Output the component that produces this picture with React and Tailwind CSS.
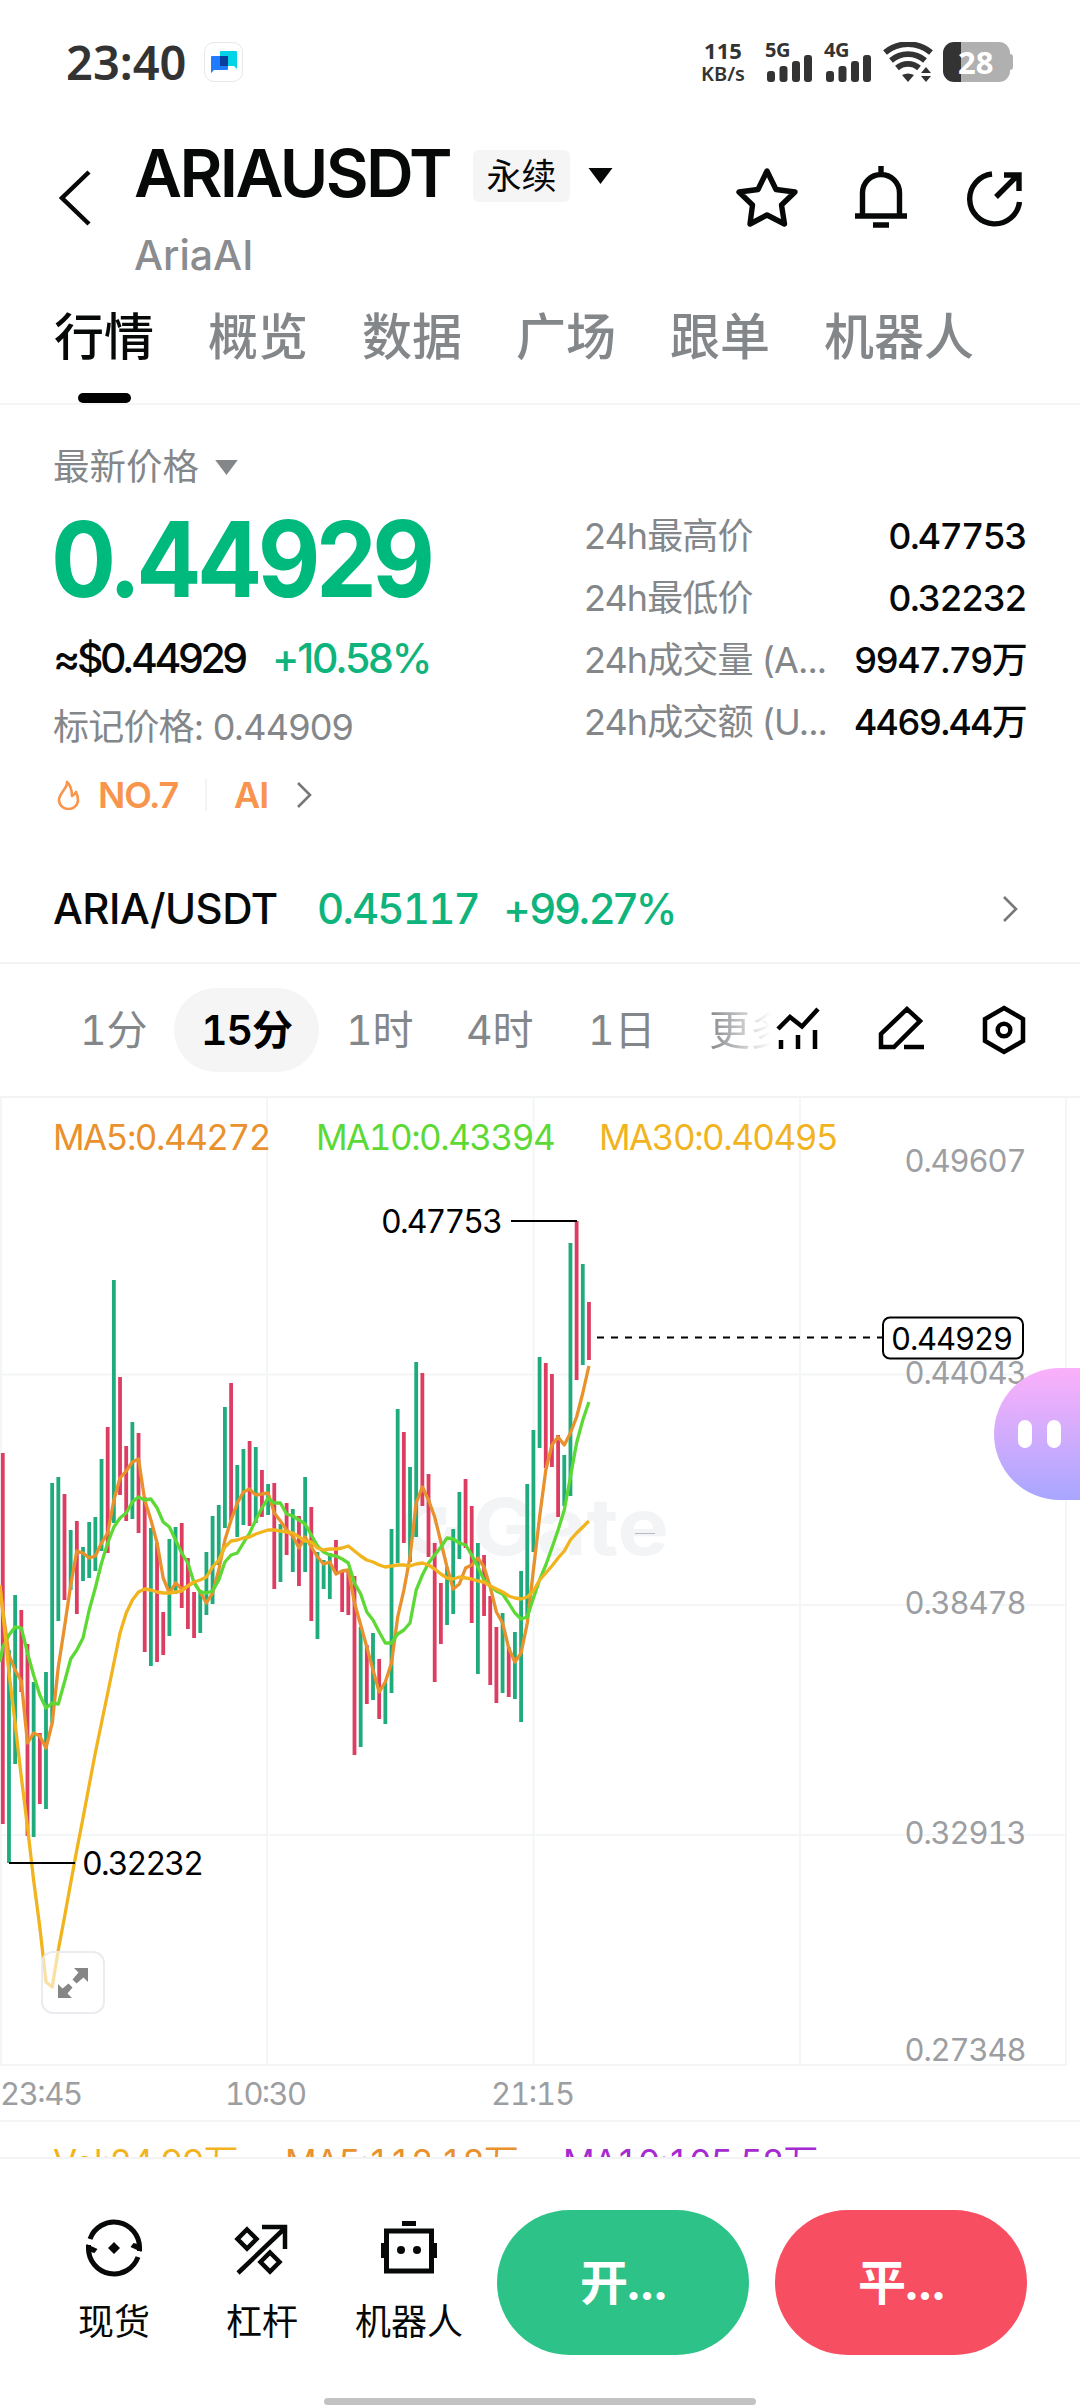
const TABS = ['行情', '概览', '数据', '广场', '跟单', '机器人']

const STATS = [
  { label: '24h最高价', value: '0.47753' },
  { label: '24h最低价', value: '0.32232' },
  { label: '24h成交量 (A...', value: '9947.79万' },
  { label: '24h成交额 (U...', value: '4469.44万' },
]

// [up/down, high y, low y]
const CANDLES = [
  ['d', 1453, 1824], ['u', 1650, 1863], ['u', 1595, 1764], ['d', 1610, 1692], ['d', 1644, 1836], ['u', 1682, 1837],
  ['d', 1733, 1804], ['u', 1672, 1809], ['u', 1483, 1723], ['u', 1477, 1621], ['d', 1494, 1600], ['u', 1530, 1590],
  ['d', 1521, 1614], ['u', 1547, 1581], ['u', 1522, 1578], ['u', 1517, 1571], ['u', 1459, 1551], ['d', 1427, 1553],
  ['u', 1280, 1523], ['d', 1377, 1495], ['d', 1446, 1521], ['u', 1422, 1519], ['d', 1433, 1533], ['d', 1497, 1652],
  ['u', 1528, 1666], ['d', 1543, 1662], ['d', 1612, 1655], ['u', 1539, 1636], ['u', 1527, 1594], ['d', 1523, 1608],
  ['d', 1558, 1629], ['d', 1592, 1638], ['u', 1590, 1633], ['u', 1552, 1615], ['u', 1516, 1604], ['u', 1505, 1565],
  ['u', 1407, 1528], ['d', 1383, 1520], ['u', 1465, 1537], ['u', 1449, 1525], ['d', 1441, 1526], ['u', 1447, 1523],
  ['d', 1470, 1517], ['u', 1484, 1515], ['d', 1483, 1589], ['u', 1524, 1582], ['d', 1503, 1555], ['u', 1509, 1572],
  ['d', 1516, 1586], ['u', 1477, 1572], ['d', 1507, 1621], ['u', 1552, 1639], ['u', 1560, 1589], ['u', 1553, 1599],
  ['d', 1540, 1573], ['d', 1572, 1612], ['d', 1570, 1615], ['d', 1576, 1755], ['u', 1627, 1747], ['d', 1645, 1704],
  ['u', 1633, 1700], ['d', 1659, 1719], ['u', 1682, 1724], ['u', 1529, 1693], ['u', 1409, 1563], ['d', 1432, 1543],
  ['u', 1467, 1562], ['u', 1362, 1537], ['d', 1373, 1506], ['d', 1474, 1557], ['d', 1543, 1682], ['d', 1583, 1644],
  ['u', 1567, 1625], ['u', 1529, 1614], ['u', 1492, 1559], ['d', 1479, 1548], ['d', 1506, 1623], ['u', 1543, 1674],
  ['d', 1555, 1616], ['d', 1596, 1685], ['d', 1627, 1703], ['u', 1613, 1693], ['d', 1647, 1697], ['u', 1632, 1699],
  ['u', 1571, 1722], ['u', 1484, 1617], ['u', 1430, 1552], ['u', 1357, 1448], ['d', 1363, 1468], ['d', 1374, 1467],
  ['d', 1435, 1517], ['u', 1455, 1506], ['u', 1243, 1496], ['d', 1221, 1380], ['u', 1264, 1365], ['d', 1302, 1360],
]

const MA5 = [
  1610, 1655, 1670, 1681, 1743, 1733, 1736, 1748, 1723, 1667, 1627, 1585, 1551, 1553, 1558, 1556, 1543, 1533, 1500, 1478,
  1471, 1462, 1459, 1500, 1520, 1543, 1578, 1593, 1583, 1589, 1586, 1582, 1592, 1603, 1593, 1570, 1540, 1520, 1503, 1492,
  1489, 1495, 1494, 1493, 1513, 1521, 1530, 1536, 1548, 1537, 1547, 1557, 1564, 1562, 1574, 1571, 1570, 1603, 1625, 1647,
  1670, 1692, 1682, 1663, 1617, 1590, 1557, 1503, 1487, 1500, 1517, 1542, 1567, 1589, 1584, 1568, 1565, 1558, 1567, 1587,
  1612, 1623, 1648, 1662, 1653, 1623, 1570, 1517, 1470, 1445, 1437, 1445, 1433, 1417, 1393, 1366,
]

const MA10 = [
  1647, 1635, 1627, 1628, 1653, 1675, 1695, 1708, 1703, 1704, 1682, 1659, 1650, 1638, 1610, 1588, 1563, 1543, 1527, 1518,
  1513, 1502, 1497, 1500, 1499, 1508, 1522, 1527, 1540, 1553, 1563, 1583, 1592, 1593, 1591, 1580, 1562, 1555, 1553, 1543,
  1533, 1520, 1508, 1498, 1503, 1503, 1514, 1516, 1520, 1524, 1535, 1546, 1552, 1555, 1556, 1559, 1563, 1583, 1594, 1612,
  1620, 1632, 1643, 1643, 1634, 1630, 1623, 1590, 1575, 1563, 1555, 1547, 1538, 1539, 1543, 1545, 1555, 1567, 1580, 1586,
  1591, 1594, 1603, 1613, 1619, 1617, 1598, 1580, 1565, 1548, 1530, 1510, 1477, 1443, 1420, 1402,
]

const MA30 = [
  1612, 1673, 1723, 1777, 1827, 1880, 1927, 1982, 1987, 1950, 1917, 1883, 1850, 1818, 1785, 1753, 1723, 1693, 1663, 1633,
  1613, 1600, 1592, 1589, 1590, 1592, 1593, 1593, 1592, 1591, 1586, 1582, 1580, 1577, 1567, 1560, 1547, 1541, 1540, 1538,
  1537, 1534, 1532, 1530, 1530, 1531, 1532, 1533, 1537, 1541, 1542, 1548, 1550, 1549, 1549, 1548, 1546, 1551, 1556, 1560,
  1562, 1565, 1567, 1566, 1565, 1565, 1566, 1564, 1563, 1565, 1569, 1574, 1578, 1579, 1577, 1578, 1579, 1581, 1582, 1586,
  1589, 1592, 1596, 1598, 1599, 1597, 1591, 1580, 1573, 1566, 1558, 1551, 1540, 1533, 1527, 1521,
]

const PRICE_AXIS = [
  { y: 1161, label: '0.49607' },
  { y: 1373, label: '0.44043' },
  { y: 1603, label: '0.38478' },
  { y: 1833, label: '0.32913' },
  { y: 2050, label: '0.27348' },
]

const xAt = (i) => 2.8 + i * 6.17
const linePoints = (startY, values) => [`0,${startY}`, ...values.map((y, i) => `${xAt(i).toFixed(1)},${y}`)].join(' ')

/* ─── Icons ──────────────────────────────────────────────────────────── */

function Caret({ className }) {
  return (
    <svg viewBox="0 0 24 16" className={className} fill="currentColor">
      <path d="M0 0h24L12 16z" />
    </svg>
  )
}

function Chevron({ className }) {
  return (
    <svg viewBox="0 0 16 28" className={className} fill="none" stroke="currentColor" strokeWidth="2.6">
      <path d="M2 2l12 12L2 26" />
    </svg>
  )
}

function Signal({ label }) {
  return (
    <div className="relative w-[46px] h-10">
      <span className="absolute -left-0.5 -top-0.5 text-[20px] leading-5 font-bold tracking-tight">{label}</span>
      <svg viewBox="0 0 46 40" className="w-[46px] h-10" fill="currentColor">
        <rect x="0" y="29" width="8" height="11" rx="3" />
        <rect x="12.5" y="24" width="8" height="16" rx="3" />
        <rect x="25" y="19" width="8" height="21" rx="3" />
        <rect x="37" y="13" width="8" height="27" rx="3" />
      </svg>
    </div>
  )
}

function WifiIcon() {
  return (
    <svg viewBox="0 0 50 40" className="w-[50px] h-10" fill="none" stroke="currentColor" strokeWidth="5.8">
      <path d="M2 10.500a36 36 0 0 1 46 0" />
      <path d="M8 18.500a26 26 0 0 1 34 0" />
      <path d="M14 26a17 17 0 0 1 22 0" />
      <path d="M19 33q6-3 12 0l-6 7z" fill="currentColor" stroke="none" />
      <path d="M38 31l5-6 5 6zM38 34h10l-5 6z" fill="currentColor" stroke="none" />
    </svg>
  )
}

/* ─── Sections ───────────────────────────────────────────────────────── */

function StatusBar() {
  return (
    <div className="flex h-[124px] items-center pl-[66px] pr-[67px] text-[#333] font-['Noto_Sans',sans-serif]">
      <span className="w-[120px] text-[47px] leading-none font-semibold">23:40</span>
      <div className="ml-[18px] flex h-10 w-[39px] items-center justify-center rounded-[10px] border border-gray-200">
        <svg viewBox="0 0 28 24" className="h-6 w-7">
          <path d="M11 1h15q1 0 1 1v17l-3-3H11q-1 0-1-1V2q0-1 1-1z" fill="#00d4e6" />
          <path d="M2 6h15q1 0 1 1v12q0 1-1 1H4l-3 3V7q0-1 1-1z" fill="#1f7bff" />
          <path d="M10 6h8v10h-8z" fill="#0a3f9e" />
        </svg>
      </div>
      <div className="ml-auto flex items-center">
        <div className="flex w-11 flex-col items-center text-[20px] font-semibold leading-[23px]">
          <span className="text-[22px] font-bold">115</span>
          <span>KB/s</span>
        </div>
        <div className="ml-[22px]"><Signal label="5G" /></div>
        <div className="ml-[13px]"><Signal label="4G" /></div>
        <div className="ml-[11px]"><WifiIcon /></div>
        <div className="ml-2.5 flex h-10 w-[67px] items-center overflow-hidden rounded-[11px] bg-linear-to-r from-[#333] from-27% to-[#b0b0b0] to-27% pl-[15px]">
          <span className="text-[31px] font-bold leading-none text-white">28</span>
        </div>
        <div className="h-4 w-[3px] rounded-r bg-[#b0b0b0]" />
      </div>
    </div>
  )
}

function Header() {
  return (
    <header className="flex h-[156px] items-start pl-[56px] pr-[53px]">
      <svg viewBox="0 0 36 60" className="mt-11 h-[60px] w-9" fill="none" stroke="currentColor" strokeWidth="4.500">
        <path d="M33 4L6 30l27 26" />
      </svg>
      <div className="ml-[42px] pt-4">
        <div className="flex h-[66px] items-center">
          <h1 className="w-[317px] whitespace-nowrap text-[66px] font-semibold leading-none tracking-[-2.600px]">ARIAUSDT</h1>
          <span className="ml-[22px] mt-1.5 flex h-[52px] w-[97px] items-center justify-center rounded-md bg-[#f5f5f6] text-[35px]">永续</span>
          <Caret className="ml-[18px] mt-1.5 h-4 w-[25px]" />
        </div>
        <p className="mt-6 h-[50px] text-[41px] font-medium leading-[50px] text-[#8a8c8f]">AriaAI</p>
      </div>
      <div className="ml-auto mt-[42px] flex gap-[50px]">
        <svg viewBox="0 0 64 64" className="size-16" fill="none" stroke="currentColor" strokeWidth="5.4" strokeLinejoin="round">
          <path d="M32 5L41 23.500L60 26L46.500 39L49.500 58L32 49L15 58L17.500 39L4 26L23 23.500z" />
        </svg>
        <svg viewBox="0 0 64 64" className="size-16" fill="none" stroke="currentColor" strokeWidth="5.4">
          <path d="M13.500 49V27a18.500 18.500 0 0 1 37 0v22M6 50h52M24 59h16M32 0v9" />
        </svg>
        <svg viewBox="0 0 64 64" className="size-16" fill="none" stroke="currentColor" strokeWidth="5.4">
          <path d="M29 8A25 25 0 1 0 56.500 36M33 31L54 10M41 9h15v16" />
        </svg>
      </div>
    </header>
  )
}

function Tabs() {
  return (
    <nav className="flex h-[125px] gap-[54px] border-b-2 border-[#f4f5f6] px-[54px]">
      {TABS.map((tab, i) => (
        <div key={tab} className={`flex flex-col items-center pt-[25px] text-[50px] font-medium leading-[64px] ${i === 0 ? '' : 'text-[#84878a]'}`}>
          <span>{tab}</span>
          {i === 0 && <div className="mt-auto h-2.5 w-[53px] rounded-full bg-black" />}
        </div>
      ))}
    </nav>
  )
}

function PriceSummary() {
  return (
    <section className="flex justify-between pl-[53px] pr-[54px]">
      <div className="w-[450px] pt-10">
        <div className="flex h-11 items-center text-[36.500px] leading-none text-[#84878a]">
          <span>最新价格</span>
          <Caret className="ml-4 h-[15px] w-[23px]" />
        </div>
        <div className="-ml-0.5 flex h-[138px] origin-left scale-x-[0.92] items-center text-[105px] font-bold leading-none tracking-[-5px] text-[#00b97c]">0.44929</div>
        <div className="flex h-[62px] items-center whitespace-nowrap text-[41px] font-medium leading-none">
          <span className="w-[219px] tracking-[-3.400px]">≈$0.44929</span>
          <span className="tracking-[-2.200px] text-[#0fb47d]">+10.58%</span>
        </div>
        <div className="flex h-[76px] items-center text-[36px] leading-none tracking-[-0.800px] text-[#84878a]">标记价格: 0.44909</div>
        <div className="flex h-[60px] items-center text-[36px] font-semibold leading-none text-[#f8944c]">
          <svg viewBox="0 0 24 30" className="ml-1 h-[30px] w-6" fill="none" stroke="currentColor" strokeWidth="2.600" strokeLinejoin="round">
            <path d="M10 2c1 6-8 11-8 18a9.500 9 0 0 0 19 0c0-3-1-6-2-8-1 2-2 3-4 4 0-6-1-10-5-14z" />
          </svg>
          <span className="ml-[17px] w-[79px] tracking-[-1.200px]">NO.7</span>
          <div className="ml-[28px] h-8 w-0.5 bg-gray-100" />
          <span className="ml-[27px] tracking-[-1px]">AI</span>
          <Chevron className="ml-[28px] h-7 w-4 text-[#777]" />
        </div>
      </div>
      <div className="w-[442px] pt-[100px] text-[36px] leading-none">
        {STATS.map(({ label, value }) => (
          <div key={label} className="flex h-[62px] items-center justify-between whitespace-nowrap">
            <span className="tracking-[-0.900px] text-[#84878a]">{label}</span>
            <span className="font-medium tabular-nums tracking-[-1.700px]">{value}</span>
          </div>
        ))}
      </div>
    </section>
  )
}

function SpotRow() {
  return (
    <div className="mt-[30px] flex h-[109px] items-center border-b-2 border-[#f2f3f4] pl-[53px] pr-[62px] text-[42px] font-medium leading-none">
      <span className="w-[264px] tracking-[-0.500px]">ARIA/USDT</span>
      <span className="w-[186px] tabular-nums tracking-[-1.800px] text-[#0fb47d]">0.45117</span>
      <span className="tracking-[-1.600px] text-[#0fb47d]">+99.27%</span>
      <Chevron className="ml-auto h-7 w-4 text-[#777]" />
    </div>
  )
}

function Toolbar() {
  return (
    <div className="flex h-[134px] items-center border-b-2 border-[#f2f3f4] pl-[80px] pr-[53px] text-[41px] leading-none tabular-nums text-[#84878a]">
      <span className="w-[94px]">1分</span>
      <span className="flex h-[84px] w-[145px] items-center justify-center rounded-full bg-[#f5f5f6] font-semibold tracking-[-1px] text-black">15分</span>
      <span className="ml-[27px] w-[120px]">1时</span>
      <span className="w-[122px]">4时</span>
      <span className="w-[121px]">1日</span>
      <span className="w-[62px] overflow-hidden whitespace-nowrap bg-linear-to-r from-[#84878a] to-transparent bg-clip-text py-2 text-transparent">更多</span>
      <div className="ml-auto flex gap-[54px] text-black">
        <svg viewBox="0 0 48 50" className="h-[50px] w-12" fill="none" stroke="currentColor" strokeWidth="4.500">
          <path d="M3 24L15 12L27 21.500L43 4M6 35v9M23 30v14M40 25v19" />
        </svg>
        <svg viewBox="0 0 48 50" className="h-[50px] w-12" fill="none" stroke="currentColor" strokeWidth="4.500">
          <path d="M4 42V29L30 4L43 16L17 42zM27 42h20" />
        </svg>
        <svg viewBox="0 0 48 50" className="h-[50px] w-12" fill="none" stroke="currentColor" strokeWidth="4.500">
          <path d="M25 3L44 14V36L25 47L6 36V14z" />
          <circle cx="25" cy="25" r="6.300" />
        </svg>
      </div>
    </div>
  )
}

function PriceChart() {
  return (
    <svg viewBox="0 1098 1080 1022" className="block h-[1022px] w-[1080px] font-['Inter',sans-serif] tabular-nums">
      <g stroke="#f4f5f6" strokeWidth="2">
        {[1374.5, 1605, 1835, 2065].map((y) => <path key={y} d={`M0 ${y}H1067`} />)}
        {[1, 267, 533.5, 800, 1066].map((x) => <path key={x} d={`M${x} 1098V2065`} />)}
      </g>

      {/* Watermark */}
      <g fill="#f3f4f5">
        <path d="M431 1499v13a15 15 0 1 0 15 15h13a28 28 0 1 1-28-28z" />
        <rect x="433" y="1507" width="13" height="18" />
        <text x="472" y="1555" fontSize="79" fontWeight="700" textLength="197" lengthAdjust="spacingAndGlyphs">Gate</text>
      </g>
      <path d="M635 1533.500h20" stroke="#b9b9c4" strokeWidth="1" />

      {CANDLES.map(([dir, high, low], i) => (
        <rect key={i} x={xAt(i) - 1.9} y={high} width="3.8" height={low - high} fill={dir === 'u' ? '#1fab7c' : '#de3d62'} />
      ))}

      <g fill="none" strokeWidth="3.3" strokeLinejoin="round">
        <polyline points={linePoints(1588, MA5)} stroke="#e8912d" />
        <polyline points={linePoints(1662, MA10)} stroke="#5cd935" />
        <polyline points={linePoints(1585, MA30)} stroke="#f1b41f" />
      </g>

      {/* High / low markers */}
      <path d="M511 1221h66M9 1863h66" stroke="#000" strokeWidth="2" />
      <text x="381" y="1233" fontSize="32" textLength="122">0.47753</text>
      <text x="82" y="1875" fontSize="32" textLength="122">0.32232</text>

      <g fill="#9c9ea1" fontSize="31">
        {PRICE_AXIS.map(({ y, label }) => (
          <text key={label} x="904.500" y={y + 11} textLength="122">{label}</text>
        ))}
        <text x="0" y="2105" textLength="83">23:45</text>
        <text x="225" y="2105" textLength="82">10:30</text>
        <text x="491" y="2105" textLength="84">21:15</text>
      </g>

      {/* Last price */}
      <path d="M597 1337.500H882" stroke="#000" strokeWidth="2" strokeDasharray="7 7" />
      <rect x="883" y="1317.500" width="140" height="41" rx="7" fill="#fff" stroke="#000" strokeWidth="2" />
      <text x="891" y="1349.500" fontSize="31" textLength="122">0.44929</text>
    </svg>
  )
}

function Chart() {
  return (
    <section className="relative h-[1059px] overflow-hidden">
      <PriceChart />
      <div className="absolute left-[53px] top-[17px] flex whitespace-nowrap text-[35px] leading-[44px] tracking-[-1.500px] tabular-nums">
        <span className="w-[263px] text-[#e8912d]">MA5:0.44272</span>
        <span className="w-[283px] text-[#5cd935]">MA10:0.43394</span>
        <span className="text-[#f1b41f]">MA30:0.40495</span>
      </div>

      {/* Expand */}
      <div className="absolute left-[41px] top-[853px] flex h-[63px] w-[64px] items-center justify-center rounded-xl border-2 border-gray-200/80 bg-white/60">
        <svg viewBox="0 0 30 30" className="size-[30px]" fill="#868686">
          <path d="M16 0h14v14l-4.500-4.500-7 6-4-4 6-7zM14 30H0V16l4.500 4.500 6-5 4 4-5 6z" />
        </svg>
      </div>

      {/* Assistant */}
      <div className="absolute right-0 top-[270px] flex h-[132px] w-[86px] items-center gap-[15px] rounded-l-full bg-linear-to-b from-[#fbb0fa] to-[#a8a6ff] pl-6">
        <div className="h-7 w-3.5 rounded-full bg-white" />
        <div className="h-7 w-3.5 rounded-full bg-white" />
      </div>

      <div className="flex whitespace-nowrap border-t-2 border-[#f4f5f6] pl-[53px] pt-[18px] text-[35px] leading-[44px] tracking-[-1.200px] tabular-nums">
        <span className="w-[232px] text-[#f1b41f]">Vol:24.99万</span>
        <span className="w-[278px] text-[#e8912d]">MA5:112.18万</span>
        <span className="text-[#a52ad0]">MA10:105.58万</span>
      </div>
    </section>
  )
}

function BottomBar() {
  return (
    <footer className="flex flex-1 flex-col border-t-2 border-[#f2f3f4] bg-white">
      <div className="flex pl-[54px] pr-[53px] pt-[51px]">
        <div className="flex flex-1 text-[36px] leading-[44px]">
          <div className="flex w-[120px] flex-col items-center pt-2">
            <svg viewBox="0 0 60 60" className="size-[60px]" fill="none" stroke="currentColor" strokeWidth="5">
              <path d="M6 21A25.500 25.500 0 0 1 55.500 30v3M54 39A25.500 25.500 0 0 1 4.500 30v-3" />
              <path d="M57.500 34l-11-5 3-4 8 2zM2.500 26l11 5-3 4-8-2zM30 24l6 6-6 6-6-6z" fill="currentColor" stroke="none" />
            </svg>
            <span className="mt-[22px]">现货</span>
          </div>
          <div className="ml-[28px] flex w-[120px] flex-col items-center pt-2">
            <svg viewBox="0 0 60 60" className="size-[60px]" fill="none" stroke="currentColor" strokeWidth="4.500">
              <path d="M6 55L53 10M30 9h23v22M15 11.500L24.500 21l-9.500 9.500L5.500 21zM38 34.500l9.500 9.500-9.500 9.500L28.500 44z" />
            </svg>
            <span className="mt-[22px]">杠杆</span>
          </div>
          <div className="ml-[27px] flex w-[120px] flex-col items-center whitespace-nowrap pt-2">
            <svg viewBox="0 0 60 60" className="size-[60px]" fill="none" stroke="currentColor" strokeWidth="5">
              <rect x="7.500" y="13" width="45" height="40" />
              <path d="M23 5.500h14M4.500 25v15M55.500 25v15" />
              <circle cx="22" cy="32" r="4" fill="currentColor" stroke="none" />
              <circle cx="38" cy="32" r="4" fill="currentColor" stroke="none" />
            </svg>
            <span className="mt-[22px]">机器人</span>
          </div>
        </div>
        <div className="flex gap-[26px] text-[48px] font-bold tracking-[-2.500px] text-white">
          <button className="h-[145px] w-[252px] rounded-full bg-[#2dc388]">开...</button>
          <button className="h-[145px] w-[252px] rounded-full bg-[#f84e61]">平...</button>
        </div>
      </div>
      <div className="mx-auto mb-[3px] mt-auto h-[7px] w-[432px] rounded-full bg-[#c2c2c2]" />
    </footer>
  )
}

export default function App() {
  return (
    <div className="flex h-[2408px] w-[1080px] flex-col overflow-hidden bg-white text-[#070808] font-['Inter','Noto_Sans_CJK_SC',sans-serif]">
      <StatusBar />
      <Header />
      <Tabs />
      <PriceSummary />
      <SpotRow />
      <Toolbar />
      <Chart />
      <BottomBar />
    </div>
  )
}
